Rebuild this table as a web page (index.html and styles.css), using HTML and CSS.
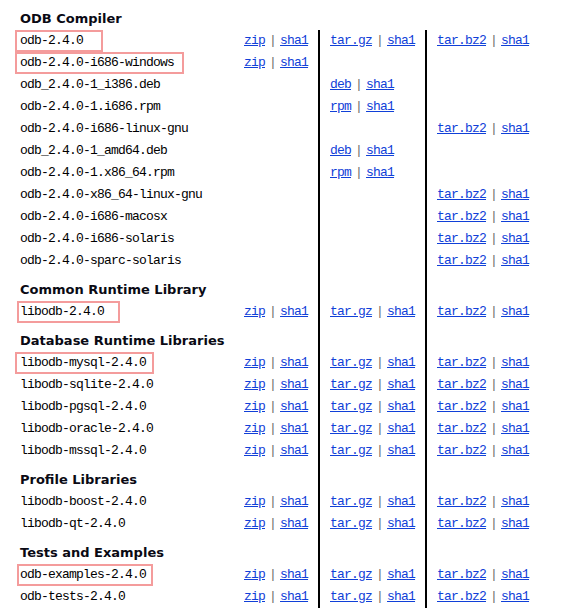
FILE: index.html
```html
<!DOCTYPE html>
<html>
<head>
<meta charset="utf-8">
<link rel="stylesheet" href="styles.css">
</head>
<body>
<h2 class="title">ODB Compiler</h2>
<div class="grid">
  <div class="row"><div class="name"><span class="mark m1">odb-2.4.0</span></div><div class="c2"><a href="#">zip</a><span class="sep">|</span><a href="#">sha1</a></div><div class="c3"><a href="#">tar.gz</a><span class="sep">|</span><a href="#">sha1</a></div><div class="c4"><a href="#">tar.bz2</a><span class="sep">|</span><a href="#">sha1</a></div></div>
  <div class="row"><div class="name"><span class="mark m2">odb-2.4.0-i686-windows</span></div><div class="c2"><a href="#">zip</a><span class="sep">|</span><a href="#">sha1</a></div><div class="c3"></div><div class="c4"></div></div>
  <div class="row"><div class="name">odb_2.4.0-1_i386.deb</div><div class="c2"></div><div class="c3"><a href="#">deb</a><span class="sep">|</span><a href="#">sha1</a></div><div class="c4"></div></div>
  <div class="row"><div class="name">odb-2.4.0-1.i686.rpm</div><div class="c2"></div><div class="c3"><a href="#">rpm</a><span class="sep">|</span><a href="#">sha1</a></div><div class="c4"></div></div>
  <div class="row"><div class="name">odb-2.4.0-i686-linux-gnu</div><div class="c2"></div><div class="c3"></div><div class="c4"><a href="#">tar.bz2</a><span class="sep">|</span><a href="#">sha1</a></div></div>
  <div class="row"><div class="name">odb_2.4.0-1_amd64.deb</div><div class="c2"></div><div class="c3"><a href="#">deb</a><span class="sep">|</span><a href="#">sha1</a></div><div class="c4"></div></div>
  <div class="row"><div class="name">odb-2.4.0-1.x86_64.rpm</div><div class="c2"></div><div class="c3"><a href="#">rpm</a><span class="sep">|</span><a href="#">sha1</a></div><div class="c4"></div></div>
  <div class="row"><div class="name">odb-2.4.0-x86_64-linux-gnu</div><div class="c2"></div><div class="c3"></div><div class="c4"><a href="#">tar.bz2</a><span class="sep">|</span><a href="#">sha1</a></div></div>
  <div class="row"><div class="name">odb-2.4.0-i686-macosx</div><div class="c2"></div><div class="c3"></div><div class="c4"><a href="#">tar.bz2</a><span class="sep">|</span><a href="#">sha1</a></div></div>
  <div class="row"><div class="name">odb-2.4.0-i686-solaris</div><div class="c2"></div><div class="c3"></div><div class="c4"><a href="#">tar.bz2</a><span class="sep">|</span><a href="#">sha1</a></div></div>
  <div class="row"><div class="name">odb-2.4.0-sparc-solaris</div><div class="c2"></div><div class="c3"></div><div class="c4"><a href="#">tar.bz2</a><span class="sep">|</span><a href="#">sha1</a></div></div>

  <div class="row head"><div class="hname">Common Runtime Library</div><div class="c2"></div><div class="c3"></div><div class="c4"></div></div>
  <div class="row"><div class="name"><span class="mark m3">libodb-2.4.0</span></div><div class="c2"><a href="#">zip</a><span class="sep">|</span><a href="#">sha1</a></div><div class="c3"><a href="#">tar.gz</a><span class="sep">|</span><a href="#">sha1</a></div><div class="c4"><a href="#">tar.bz2</a><span class="sep">|</span><a href="#">sha1</a></div></div>

  <div class="row head"><div class="hname">Database Runtime Libraries</div><div class="c2"></div><div class="c3"></div><div class="c4"></div></div>
  <div class="row"><div class="name"><span class="mark m4">libodb-mysql-2.4.0</span></div><div class="c2"><a href="#">zip</a><span class="sep">|</span><a href="#">sha1</a></div><div class="c3"><a href="#">tar.gz</a><span class="sep">|</span><a href="#">sha1</a></div><div class="c4"><a href="#">tar.bz2</a><span class="sep">|</span><a href="#">sha1</a></div></div>
  <div class="row"><div class="name">libodb-sqlite-2.4.0</div><div class="c2"><a href="#">zip</a><span class="sep">|</span><a href="#">sha1</a></div><div class="c3"><a href="#">tar.gz</a><span class="sep">|</span><a href="#">sha1</a></div><div class="c4"><a href="#">tar.bz2</a><span class="sep">|</span><a href="#">sha1</a></div></div>
  <div class="row"><div class="name">libodb-pgsql-2.4.0</div><div class="c2"><a href="#">zip</a><span class="sep">|</span><a href="#">sha1</a></div><div class="c3"><a href="#">tar.gz</a><span class="sep">|</span><a href="#">sha1</a></div><div class="c4"><a href="#">tar.bz2</a><span class="sep">|</span><a href="#">sha1</a></div></div>
  <div class="row"><div class="name">libodb-oracle-2.4.0</div><div class="c2"><a href="#">zip</a><span class="sep">|</span><a href="#">sha1</a></div><div class="c3"><a href="#">tar.gz</a><span class="sep">|</span><a href="#">sha1</a></div><div class="c4"><a href="#">tar.bz2</a><span class="sep">|</span><a href="#">sha1</a></div></div>
  <div class="row"><div class="name">libodb-mssql-2.4.0</div><div class="c2"><a href="#">zip</a><span class="sep">|</span><a href="#">sha1</a></div><div class="c3"><a href="#">tar.gz</a><span class="sep">|</span><a href="#">sha1</a></div><div class="c4"><a href="#">tar.bz2</a><span class="sep">|</span><a href="#">sha1</a></div></div>

  <div class="row head"><div class="hname">Profile Libraries</div><div class="c2"></div><div class="c3"></div><div class="c4"></div></div>
  <div class="row"><div class="name">libodb-boost-2.4.0</div><div class="c2"><a href="#">zip</a><span class="sep">|</span><a href="#">sha1</a></div><div class="c3"><a href="#">tar.gz</a><span class="sep">|</span><a href="#">sha1</a></div><div class="c4"><a href="#">tar.bz2</a><span class="sep">|</span><a href="#">sha1</a></div></div>
  <div class="row"><div class="name">libodb-qt-2.4.0</div><div class="c2"><a href="#">zip</a><span class="sep">|</span><a href="#">sha1</a></div><div class="c3"><a href="#">tar.gz</a><span class="sep">|</span><a href="#">sha1</a></div><div class="c4"><a href="#">tar.bz2</a><span class="sep">|</span><a href="#">sha1</a></div></div>

  <div class="row head"><div class="hname">Tests and Examples</div><div class="c2"></div><div class="c3"></div><div class="c4"></div></div>
  <div class="row"><div class="name"><span class="mark m5">odb-examples-2.4.0</span></div><div class="c2"><a href="#">zip</a><span class="sep">|</span><a href="#">sha1</a></div><div class="c3"><a href="#">tar.gz</a><span class="sep">|</span><a href="#">sha1</a></div><div class="c4"><a href="#">tar.bz2</a><span class="sep">|</span><a href="#">sha1</a></div></div>
  <div class="row"><div class="name">odb-tests-2.4.0</div><div class="c2"><a href="#">zip</a><span class="sep">|</span><a href="#">sha1</a></div><div class="c3"><a href="#">tar.gz</a><span class="sep">|</span><a href="#">sha1</a></div><div class="c4"><a href="#">tar.bz2</a><span class="sep">|</span><a href="#">sha1</a></div></div>
</div>
</body>
</html>
```
FILE: styles.css
```css
html, body {
  margin: 0;
  background: #fff;
}
body {
  padding: 1px 0 0 20px;
  font-family: "Liberation Mono", "DejaVu Sans Mono", monospace;
  font-size: 13px;
  letter-spacing: -0.8px;
  color: #000;
}
.title, .hname {
  font-family: "DejaVu Sans", Verdana, sans-serif;
  font-weight: bold;
  font-size: 13px;
  letter-spacing: 0;
  line-height: 22px;
  color: #0a0a14;
  margin: 0;
  padding-top: 7px;
  white-space: nowrap;
}
.grid {
  display: flex;
  flex-direction: column;
}
.row {
  display: grid;
  grid-template-columns: 224px 74px 107px 1fr;
  height: 22px;
  line-height: 22px;
  white-space: pre;
}
.row.head {
  height: 29px;
}
.c3, .c4 {
  border-left: 2px solid #000;
  padding-left: 10px;
}
a {
  color: #1040d8;
  text-decoration: underline;
}
.sep {
  color: #6a6a6a;
  padding: 0 4px;
}
.mark {
  display: inline-block;
  line-height: 18px;
  border: 2px solid #f49c9c;
  margin-left: -5px;
  padding-left: 3px;
  vertical-align: middle;
}
.m1 { padding-right: 18px; }
.m2 { padding-right: 8px; }
.m3 { padding-right: 14px; margin-left: -3px; padding-left: 1px; }
.m4 { padding-right: 6px; }
.m5 { padding-right: 5px; margin-left: -3px; padding-left: 1px; }
```
